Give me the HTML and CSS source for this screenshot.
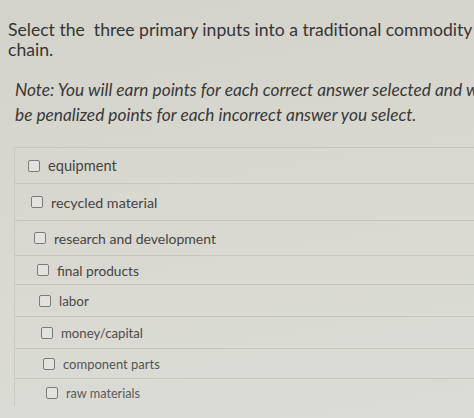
FILE: index.html
```html
<!DOCTYPE html>
<html>
<head>
<meta charset="utf-8">
<link rel="stylesheet" href="styles.css">
</head>
<body>
<div class="page">
  <div class="question">
    <p class="prompt">Select the&nbsp; three primary inputs into a traditional commodity chain.</p>
    <p class="note">Note: You will earn points for each correct answer selected and will be penalized points for each incorrect answer you select.</p>
  </div>
  <ul class="answers">
    <li class="answer"><span class="box"></span><span class="label">equipment</span></li>
    <li class="answer"><span class="box"></span><span class="label">recycled material</span></li>
    <li class="answer"><span class="box"></span><span class="label">research and development</span></li>
    <li class="answer"><span class="box"></span><span class="label">final products</span></li>
    <li class="answer"><span class="box"></span><span class="label">labor</span></li>
    <li class="answer"><span class="box"></span><span class="label">money/capital</span></li>
    <li class="answer"><span class="box"></span><span class="label">component parts</span></li>
    <li class="answer"><span class="box"></span><span class="label">raw materials</span></li>
  </ul>
</div>
</body>
</html>
```

FILE: styles.css
```css
html, body {
  margin: 0;
  padding: 0;
}
body {
  width: 474px;
  height: 418px;
  overflow: hidden;
  background: linear-gradient(170deg, #d3d3cb 0%, #d8d8d0 45%, #dcdcd7 100%);
  font-family: Lato, "Noto Sans", sans-serif;
  color: #363636;
}
.page {
  padding-top: 20px;
}
.question {
  padding-left: 8px;
  width: 466px;
}
.prompt {
  margin: 0;
  font-size: 17.6px;
  line-height: 20px;
  color: #353535;
  width: 480px;
}
.note {
  margin: 17px 0 0 7px;
  font-size: 17.3px;
  line-height: 25px;
  font-style: italic;
  color: #383838;
  width: 478px;
}
.answers {
  list-style: none;
  margin: 20px 0 0 14px;
  padding: 0;
  border-left: 1px solid #c9c9c2;
}
.answer {
  display: flex;
  align-items: center;
  gap: 8px;
  border-top: 1px solid #c6c6be;
  color: #444;
  font-size: 14px;
}
.box {
  width: 10px;
  height: 10px;
  border: 1px solid #7c7c7c;
  border-radius: 2px;
  background: #e2e2de;
  flex: none;
}
.answer:nth-child(1) { height: 35px; padding-left: 13px; font-size: 14.6px; }
.answer:nth-child(2) { height: 36px; padding-left: 16px; font-size: 14.3px; }
.answer:nth-child(3) { height: 34px; padding-left: 19px; font-size: 14px; }
.answer:nth-child(4) { height: 28px; padding-left: 22px; font-size: 13.7px; }
.answer:nth-child(5) { height: 31px; padding-left: 24px; font-size: 13.4px; color: #4a4a4a; }
.answer:nth-child(6) { height: 31px; padding-left: 26px; font-size: 13.2px; color: #4d4d4d; }
.answer:nth-child(7) { height: 29px; padding-left: 28px; font-size: 13px; color: #555; }
.answer:nth-child(8) { height: 27px; padding-left: 31px; font-size: 12.7px; color: #5a5a5a; }
```
